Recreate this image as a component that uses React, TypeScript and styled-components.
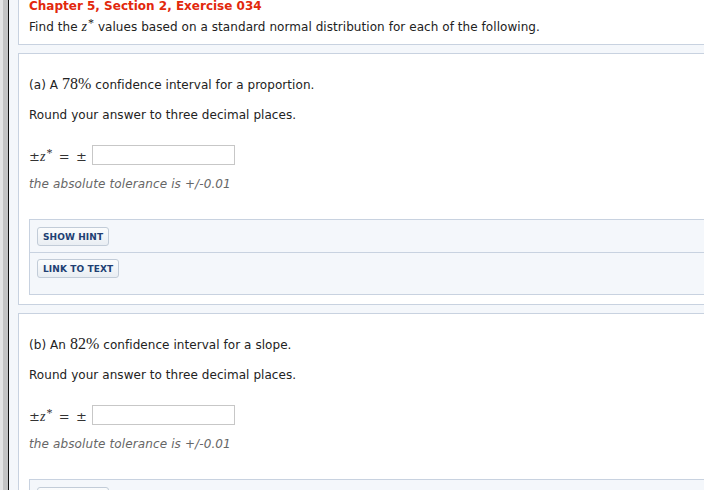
import React from 'react';
import styled, { createGlobalStyle } from 'styled-components';

const GlobalStyle = createGlobalStyle`
    html, body {
        margin: 0;
        padding: 0;
        background: #ffffff;
    }
    body {
        font-family: 'DejaVu Sans', Verdana, sans-serif;
        font-size: 12px;
        letter-spacing: 0.06px;
        color: #222;
        overflow: hidden;
    }
`;

const Frame = styled.div`
    display: flex;
    width: 704px;
    height: 490px;
    overflow: hidden;
`;

const Gutter = styled.div`
    flex: 0 0 3px;
    background: #e4e4e4;
`;

const Rail = styled.div`
    flex: 0 0 5px;
    background: #c4c4c4;
    border-right: 1px solid #111;
`;

const Main = styled.div`
    flex: 1;
    display: flex;
    flex-direction: column;
    gap: 8px;
    padding-left: 9px;
    background: #f4f7fb;
`;

const Panel = styled.section<{ $open?: boolean }>`
    background: #fff;
    border: 1px solid #c8d2e0;
    border-top: ${(p) => (p.$open ? 'none' : '1px solid #c8d2e0')};
    margin-right: -20px;
    padding: ${(p) => (p.$open ? '0 10px 9px' : '22px 10px 9px')};
`;

const Title = styled.h1`
    margin: 0;
    font-size: 12px;
    line-height: 12px;
    font-weight: bold;
    letter-spacing: 0;
    color: #e2280c;
`;

const Line = styled.p<{ $gap?: number }>`
    margin: ${(p) => p.$gap ?? 0}px 0 0;
    line-height: 15px;
`;

const Num = styled.span`
    font-family: 'Liberation Serif', 'Times New Roman', serif;
    font-size: 16px;
    line-height: 15px;
`;

const MathZ = styled.span`
    font-family: 'Liberation Serif', 'Times New Roman', serif;
    font-style: italic;
    font-size: 14px;
    sup {
        font-style: normal;
        font-size: 12px;
        vertical-align: 4px;
        line-height: 0;
        margin-left: 1px;
    }
`;

const AnswerRow = styled.div`
    display: flex;
    align-items: center;
    gap: 5px;
    margin-top: 22px;
    height: 20px;
`;

const Expr = styled.span`
    font-family: 'DejaVu Sans', Verdana, sans-serif;
    font-size: 13px;
    color: #333;
    white-space: pre;
    word-spacing: 2px;
    padding-top: 4px;
`;

const Input = styled.input`
    box-sizing: border-box;
    width: 143px;
    height: 20px;
    border: 1px solid #c7c7c7;
    background: #fff;
    margin: 0;
`;

const Tolerance = styled.p`
    margin: 12px 0 0;
    line-height: 15px;
    font-style: italic;
    letter-spacing: 0.12px;
    color: #666;
`;

const HintBox = styled.div`
    margin-top: 27px;
    background: #f4f7fb;
    border: 1px solid #c8d2e0;
`;

const HintRow = styled.div<{ $last?: boolean }>`
    padding: ${(p) => (p.$last ? '6px 7px 16px' : '7px 7px 6px')};
    & + & {
        border-top: 1px solid #c8d2e0;
    }
`;

const HintButton = styled.button`
    box-sizing: border-box;
    height: 19px;
    padding: 0 5px;
    border: 1px solid #c2ccd8;
    border-radius: 3px;
    background: linear-gradient(#fbfcfd, #e9eef3);
    font-family: 'DejaVu Sans', Verdana, sans-serif;
    font-size: 9px;
    font-weight: bold;
    color: #213f73;
    letter-spacing: 0.1px;
`;

const Z = () => (
    <MathZ>
        z<sup>*</sup>
    </MathZ>
);

interface PartProps {
    label: string;
    lead: string;
    pct: string;
    rest: string;
}

const Part = ({ label, lead, pct, rest }: PartProps) => (
    <Panel>
        <Line>
            ({label}) {lead} <Num>{pct}</Num> {rest}
        </Line>
        <Line $gap={15}>Round your answer to three decimal places.</Line>
        <AnswerRow>
            <Expr>
                ±<Z /> {'= ±'}
            </Expr>
            <Input type="text" />
        </AnswerRow>
        <Tolerance>the absolute tolerance is +/-0.01</Tolerance>
        <HintBox>
            <HintRow>
                <HintButton>SHOW HINT</HintButton>
            </HintRow>
            <HintRow $last>
                <HintButton>LINK TO TEXT</HintButton>
            </HintRow>
        </HintBox>
    </Panel>
);

export default function App() {
    return (
        <>
            <GlobalStyle />
            <Frame>
                <Gutter />
                <Rail />
                <Main>
                    <Panel $open>
                        <Title>Chapter 5, Section 2, Exercise 034</Title>
                        <Line $gap={7}>
                            Find the <Z /> values based on a standard normal distribution for each of the following.
                        </Line>
                    </Panel>
                    <Part label="a" lead="A" pct="78%" rest="confidence interval for a proportion." />
                    <Part label="b" lead="An" pct="82%" rest="confidence interval for a slope." />
                </Main>
            </Frame>
        </>
    );
}
